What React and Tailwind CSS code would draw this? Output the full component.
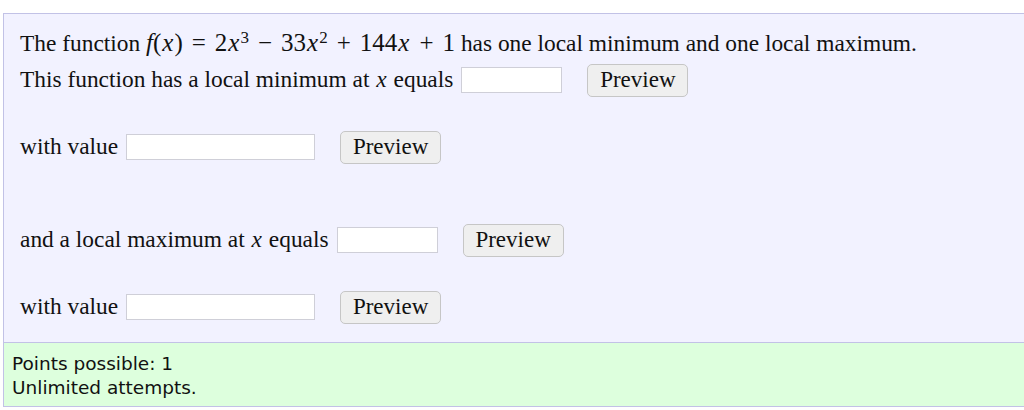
import React from 'react';

function Field({ w }) {
  return (
    <input
      type="text"
      className={`${w} h-[26px] bg-white border border-[#cfcfd8] outline-none ml-[8px]`}
    />
  );
}

function PreviewBtn() {
  return (
    <button className="ml-[25px] w-[101px] h-[33px] rounded-[5px] bg-[#efefef] border border-[#c6c6c6] text-[23px] leading-[30px] text-[#111]">
      Preview
    </button>
  );
}

const X = () => <i className="italic px-[1px]">x</i>;
const Op = ({ children }) => <span className="mx-[9px]">{children}</span>;

export default function App() {
  return (
    <div className="w-[1024px] h-[410px] bg-white pt-[13px] pl-[3px] overflow-hidden">
      <div className="bg-[#f2f2ff] border-t border-l border-[#c2c2e6] pl-[16px] pt-[15px] pb-[18px] font-['Liberation_Serif',serif] text-[23.4px] text-[#111]">
        <div className="leading-[28px] h-[28px] whitespace-nowrap">
          The function{' '}
          <span className="text-[25px]">
            <i>f</i>(<X />)<Op>=</Op>2<X /><sup className="text-[17px]">3</sup><Op>−</Op>33<X /><sup className="text-[17px]">2</sup><Op>+</Op>144<X /><Op>+</Op>1
          </span>{' '}
          has one local minimum and one local maximum.
        </div>
        <div className="mt-[6px] flex items-center h-[34px]">
          <span>This function has a local minimum at <X /> equals</span>
          <Field w="w-[101px]" />
          <PreviewBtn />
        </div>
        <div className="mt-[33px] flex items-center h-[34px]">
          <span>with value</span>
          <Field w="w-[189px]" />
          <PreviewBtn />
        </div>
        <div className="mt-[59px] flex items-center h-[34px]">
          <span>and a local maximum at <X /> equals</span>
          <Field w="w-[101px]" />
          <PreviewBtn />
        </div>
        <div className="mt-[33px] flex items-center h-[34px]">
          <span>with value</span>
          <Field w="w-[189px]" />
          <PreviewBtn />
        </div>
      </div>
      <div className="bg-[#ddffdd] border-t border-l border-b border-[#c2c2e6] pl-[8px] pt-[9px] pb-[6px] font-['DejaVu_Sans',sans-serif] text-[18.5px] leading-[24px] text-[#111]">
        <div>Points possible: 1</div>
        <div>Unlimited attempts.</div>
      </div>
    </div>
  );
}
